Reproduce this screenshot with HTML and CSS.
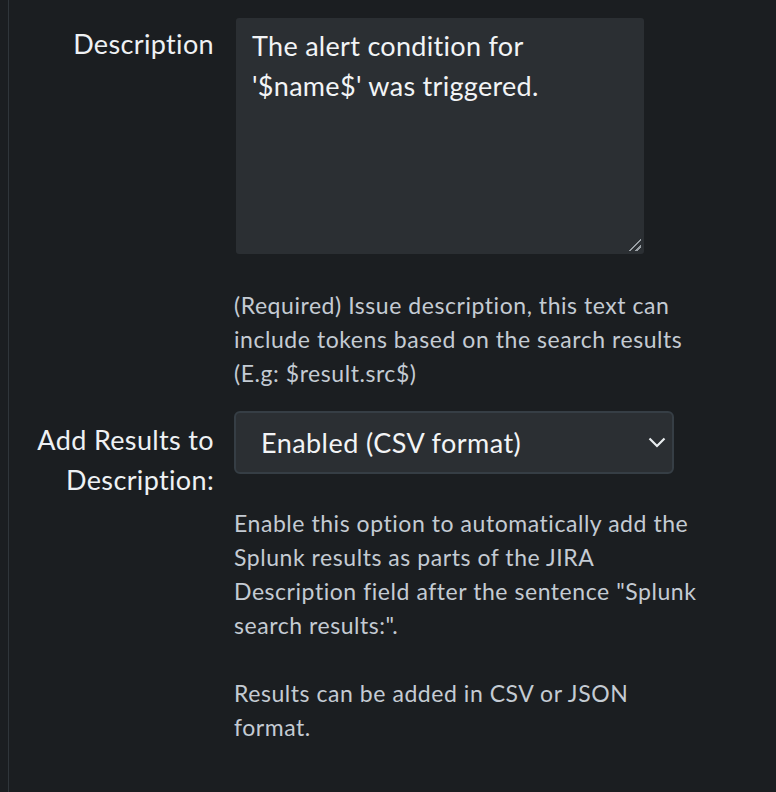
FILE: index.html
```html
<!DOCTYPE html>
<html lang="en">
<head>
<meta charset="utf-8">
<title>Alert action settings</title>
<link rel="stylesheet" href="styles.css">
</head>
<body>
<div class="panel">
  <div class="field field-desc">
    <label class="label" for="desc">Description</label>
    <div class="control">
      <div class="textarea-wrap">
        <textarea id="desc" class="textarea">The alert condition for '$name$' was triggered.</textarea>
      </div>
      <p class="help help-desc">(Required) Issue description, this text can include tokens based on the search results (E.g: $result.src$)</p>
    </div>
  </div>
  <div class="field field-results">
    <label class="label label-results" for="results">Add Results to Description:</label>
    <div class="control">
      <div class="select">
        <span class="select-value">Enabled (CSV format)</span>
        <svg class="chevron" width="18" height="11" viewBox="0 0 18 11"><path d="M1.5 1.5 L9 9 L16.5 1.5" fill="none" stroke="#e8ecef" stroke-width="2.2"/></svg>
      </div>
      <div class="help help-results">
        <p>Enable this option to automatically add the Splunk results as parts of the JIRA Description field after the sentence "Splunk search results:".</p>
        <p>Results can be added in CSV or JSON format.</p>
      </div>
    </div>
  </div>
</div>
</body>
</html>
```
FILE: styles.css
```css
html, body {
  margin: 0;
  padding: 0;
  background: #1b1e21;
  height: 100%;
}
body {
  font-family: Lato, "Noto Sans", sans-serif;
  color: #e6eaee;
}
.panel {
  margin-left: 8px;
  border-left: 1px solid #30363b;
  min-height: 100%;
  box-sizing: border-box;
  padding-top: 18px;
}
.field {
  display: flex;
  gap: 20px;
}
.label {
  width: 205px;
  flex: none;
  text-align: right;
  font-size: 27px;
  letter-spacing: 0.35px;
  line-height: 40px;
  color: #eef1f4;
  padding-top: 6px;
}
.control {
  display: flex;
  flex-direction: column;
}
.textarea-wrap {
  position: relative;
  margin-left: 2px;
  width: 408px;
  height: 236px;
  background: #2b2f33;
  border-radius: 3px;
}
.textarea {
  display: block;
  box-sizing: border-box;
  width: 100%;
  height: 100%;
  margin: 0;
  border: 0;
  outline: none;
  resize: none;
  background: transparent;
  color: #f2f4f6;
  font-family: inherit;
  font-size: 27px;
  letter-spacing: 0.3px;
  line-height: 40px;
  padding: 8px 16px;
  overflow: hidden;
}
.textarea-wrap::after {
  content: "";
  position: absolute;
  right: 3px;
  bottom: 3px;
  width: 12px;
  height: 12px;
  background:
    linear-gradient(135deg, transparent 46%, #9aa0a5 46%, #9aa0a5 56%, transparent 56%, transparent 72%, #9aa0a5 72%, #9aa0a5 84%, transparent 84%);
}
.help {
  margin: 0;
  width: 470px;
  font-size: 23px;
  letter-spacing: 0.55px;
  line-height: 34px;
  color: #c4cbd3;
}
.help-desc {
  margin-top: 34px;
  margin-bottom: 21px;
}
.field-results .label {
  padding-top: 9px;
}
.select {
  box-sizing: border-box;
  width: 440px;
  height: 63px;
  display: flex;
  align-items: center;
  justify-content: space-between;
  padding: 0 6px 0 25px;
  background: #2b2f33;
  border: 2px solid #363e45;
  border-radius: 6px;
}
.select-value {
  font-size: 27px;
  letter-spacing: 0.45px;
  color: #f2f4f6;
}
.chevron {
  display: block;
}
.help-results {
  margin-top: 32px;
}
.help-results p {
  margin: 0 0 34px;
}
```
